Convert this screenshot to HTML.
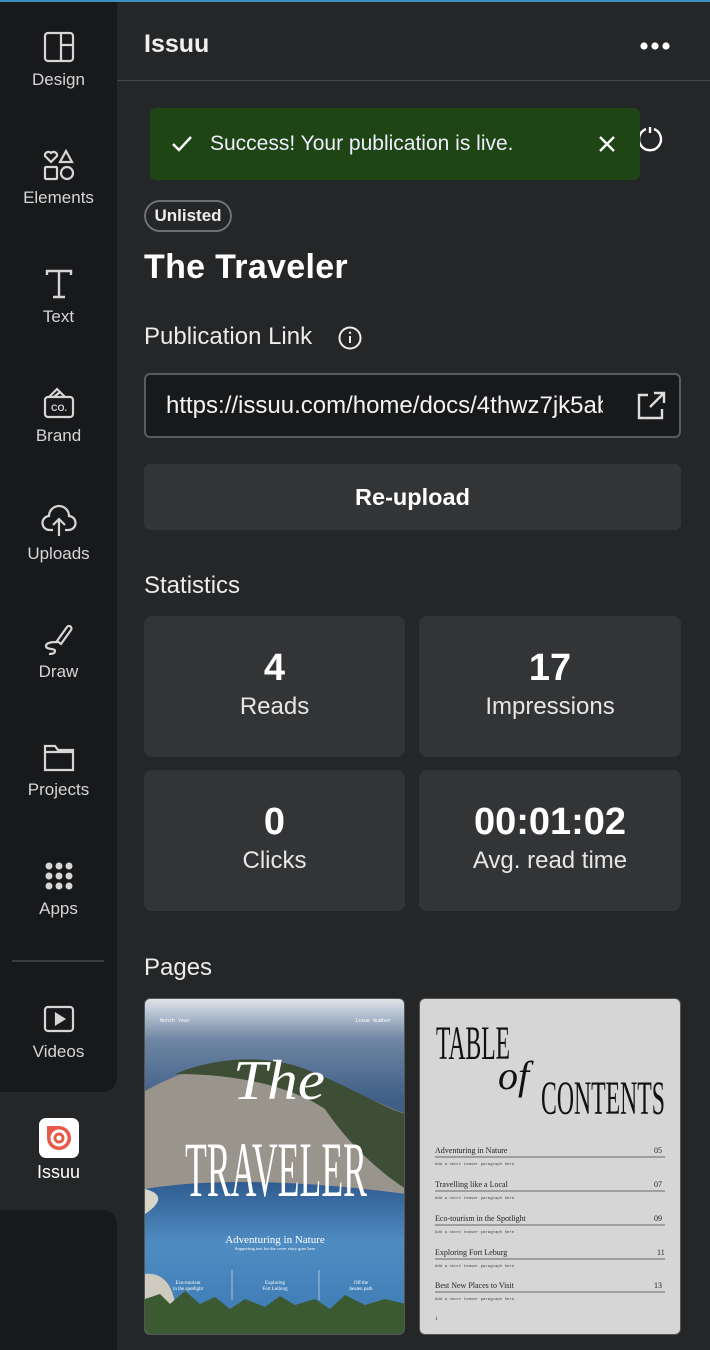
<!DOCTYPE html>
<html><head><meta charset="utf-8"><style>
*{margin:0;padding:0;box-sizing:border-box}
body{width:710px;height:1342px;background:#252627;font-family:"Liberation Sans",sans-serif;color:#fff;position:relative;overflow:hidden}
.sd1{position:absolute;left:0;top:0;width:117px;height:1092px;background:#18191b;border-bottom-right-radius:14px}
.sd2{position:absolute;left:0;top:1210px;width:117px;height:140px;background:#18191b;border-top-right-radius:14px}
.item{position:absolute;left:0;width:117px;text-align:center;font-size:17px;color:#d6d6d7}
.item svg{display:block;margin:0 auto}
.abs{position:absolute}
.h{font-size:24px;color:#ececec}
.card{position:absolute;background:#333436;border-radius:8px;text-align:center}
.card .n{font-size:38px;font-weight:bold;margin-top:32px;line-height:40px}
.card .l{font-size:24px;color:#e6e6e6;margin-top:5px}
</style></head><body>
<div class="sd1"></div><div class="sd2"></div>
<div style="position:absolute;left:0;top:0;width:710px;height:2px;background:#3a8fc0"></div>

<div class="item" style="top:30px"><svg width="34" height="34" viewBox="0 0 34 34" fill="none" stroke="#d6d6d7" stroke-width="2.2"><rect x="3" y="3" width="28" height="28" rx="3"/><path d="M19 3v28M19 15h12"/></svg><div style="margin-top:6px">Design</div></div>
<div class="item" style="top:148px"><svg width="34" height="34" viewBox="0 0 34 34" fill="none" stroke="#d6d6d7" stroke-width="2.2"><path d="M9 14L3 8a3.5 3.5 0 016-3 3.5 3.5 0 016 3z"/><path d="M24 3l6 11H18z"/><rect x="3" y="19" width="12" height="12" rx="1"/><circle cx="25" cy="25" r="6"/></svg><div style="margin-top:6px">Elements</div></div>
<div class="item" style="top:267px"><svg width="34" height="34" viewBox="0 0 34 34" fill="none" stroke="#d6d6d7" stroke-width="2.4"><path d="M5 8V4h24v4M17 4v26M11 30h12"/></svg><div style="margin-top:6px">Text</div></div>
<div class="item" style="top:386px"><svg width="34" height="34" viewBox="0 0 34 34" fill="none" stroke="#d6d6d7" stroke-width="2.2"><rect x="3" y="11" width="28" height="20" rx="3"/><path d="M7 11l8-8 4 4M12 11l6-5 5 5"/><text x="17" y="25" font-size="9" font-weight="bold" text-anchor="middle" fill="#d6d6d7" stroke="none" font-family="Liberation Sans">CO.</text></svg><div style="margin-top:6px">Brand</div></div>
<div class="item" style="top:504px"><svg width="36" height="34" viewBox="0 0 36 34" fill="none" stroke="#d6d6d7" stroke-width="2.2"><path d="M12 26H9a7 7 0 01-1-14 10 10 0 0120 0 7 7 0 01-1 14h-3"/><path d="M18 32V16M12 21l6-6 6 6"/></svg><div style="margin-top:6px">Uploads</div></div>
<div class="item" style="top:622px"><svg width="34" height="34" viewBox="0 0 34 34" fill="none" stroke="#d6d6d7" stroke-width="2.2"><path d="M15 19l10-14a2.5 2.5 0 014 3L19 22z"/><path d="M16 20c-4 0-12 0-12 4s9 2 9 5-4 3-6 3"/></svg><div style="margin-top:6px">Draw</div></div>
<div class="item" style="top:740px"><svg width="34" height="34" viewBox="0 0 34 34" fill="none" stroke="#d6d6d7" stroke-width="2.2"><path d="M3 6h10l3 4h15v20H3z M3 12h28"/></svg><div style="margin-top:6px">Projects</div></div>
<div class="item" style="top:859px"><svg width="34" height="34" viewBox="0 0 34 34" fill="#d6d6d7"><circle cx="7" cy="7" r="3.5"/><circle cx="17" cy="7" r="3.5"/><circle cx="27" cy="7" r="3.5"/><circle cx="7" cy="17" r="3.5"/><circle cx="17" cy="17" r="3.5"/><circle cx="27" cy="17" r="3.5"/><circle cx="7" cy="27" r="3.5"/><circle cx="17" cy="27" r="3.5"/><circle cx="27" cy="27" r="3.5"/></svg><div style="margin-top:6px">Apps</div></div>
<div style="position:absolute;left:12px;top:960px;width:92px;height:2px;background:#3a3b3d"></div>
<div class="item" style="top:1002px"><svg width="34" height="34" viewBox="0 0 34 34" fill="none" stroke="#d6d6d7" stroke-width="2.2"><rect x="3" y="5" width="28" height="24" rx="3"/><path d="M14 12v10l8-5z" fill="#d6d6d7"/></svg><div style="margin-top:6px">Videos</div></div>
<div class="item" style="top:1118px;color:#fff"><svg width="40" height="40" viewBox="0 0 40 40"><rect width="40" height="40" rx="7" fill="#fff"/><path d="M8 20A12 12 0 1 0 20 8H8z" fill="#e85a48"/><circle cx="20" cy="20" r="7" fill="none" stroke="#fff" stroke-width="3"/><circle cx="20" cy="20" r="2.6" fill="#fff"/></svg><div style="margin-top:4px;font-size:18px">Issuu</div></div>

<div class="abs" style="left:144px;top:30px;font-size:25px;font-weight:bold;color:#f0f0f0">Issuu</div>
<div class="abs" style="left:639px;top:38px"><svg width="32" height="10"><circle cx="5" cy="5" r="3.6" fill="#fff"/><circle cx="16" cy="5" r="3.6" fill="#fff"/><circle cx="27" cy="5" r="3.6" fill="#fff"/></svg></div>
<div class="abs" style="left:117px;top:80px;width:593px;height:1px;background:#46474a"></div>

<div class="abs" style="left:634px;top:124px"><svg width="32" height="32" viewBox="0 0 32 32" fill="none" stroke="#fff" stroke-width="2.4"><path d="M20 5a11 11 0 1 1-8 0"/><path d="M16 3v6" /></svg></div>
<div class="abs" style="left:150px;top:108px;width:490px;height:72px;background:#1e4513;border-radius:6px"></div>
<div class="abs" style="left:171px;top:134px"><svg width="22" height="20" viewBox="0 0 22 20" fill="none" stroke="#fff" stroke-width="2.4"><path d="M2 10l6 6L20 3"/></svg></div>
<div class="abs" style="left:210px;top:132px;font-size:21px;color:#eef">Success! Your publication is live.</div>
<div class="abs" style="left:598px;top:135px"><svg width="18" height="18" viewBox="0 0 18 18" stroke="#fff" stroke-width="2.4"><path d="M2 2l14 14M16 2L2 16"/></svg></div>

<div class="abs" style="left:144px;top:200px;width:88px;height:32px;border:2px solid #6e6f71;border-radius:16px;font-size:17px;text-align:center;line-height:28px;font-weight:bold;color:#eee">Unlisted</div>
<div class="abs" style="left:144px;top:248px;font-size:34px;font-weight:bold;letter-spacing:0.3px">The Traveler</div>
<div class="abs h" style="left:144px;top:323px">Publication Link</div>
<div class="abs" style="left:338px;top:326px"><svg width="24" height="24" viewBox="0 0 24 24" fill="none" stroke="#eee" stroke-width="2"><circle cx="12" cy="12" r="10.5"/><path d="M12 10v7"/><circle cx="12" cy="6.8" r="1.2" fill="#eee" stroke="none"/></svg></div>
<div class="abs" style="left:144px;top:373px;width:537px;height:65px;background:#18191b;border:2px solid #5a5b5d;border-radius:6px;overflow:hidden">
<div style="position:absolute;left:20px;top:17px;width:437px;overflow:hidden;white-space:nowrap;font-size:24px;color:#f4f4f4">https://issuu.com/home/docs/4thwz7jk5ab</div>
<svg style="position:absolute;left:488px;top:14px" width="34" height="34" viewBox="0 0 34 34" fill="none" stroke="#ddd" stroke-width="2.4"><path d="M14 6H5v23h23v-9"/><path d="M16 18L30 4M20 4h10v10"/></svg></div>
<div class="abs" style="left:144px;top:464px;width:537px;height:66px;background:#333436;border-radius:6px;text-align:center;line-height:66px;font-size:23.5px;font-weight:bold">Re-upload</div>
<div class="abs h" style="left:144px;top:572px">Statistics</div>
<div class="card" style="left:144px;top:616px;width:261px;height:141px"><div class="n">4</div><div class="l">Reads</div></div>
<div class="card" style="left:419px;top:616px;width:262px;height:141px"><div class="n">17</div><div class="l">Impressions</div></div>
<div class="card" style="left:144px;top:770px;width:261px;height:141px"><div class="n">0</div><div class="l">Clicks</div></div>
<div class="card" style="left:419px;top:770px;width:262px;height:141px"><div class="n">00:01:02</div><div class="l">Avg. read time</div></div>
<div class="abs h" style="left:144px;top:954px">Pages</div>

<div class="abs" style="left:144px;top:998px;width:261px;height:337px;border-radius:6px;overflow:hidden;border:1px solid #555">
<svg width="261" height="337" viewBox="0 0 261 337">
<defs><linearGradient id="sky" x1="0" y1="0" x2="0" y2="1"><stop offset="0" stop-color="#dfe4ea"/><stop offset=".12" stop-color="#6f86a4"/><stop offset=".3" stop-color="#3f5f86"/></linearGradient>
<linearGradient id="lag" x1="0" y1="0" x2="0" y2="1"><stop offset="0" stop-color="#2f5c90"/><stop offset=".4" stop-color="#4f8cc2"/><stop offset="1" stop-color="#3b78b0"/></linearGradient></defs>
<rect width="261" height="337" fill="url(#sky)"/>
<path d="M0 92 C30 75 70 60 110 62 C160 66 220 100 261 115 L261 200 L0 200Z" fill="#9a958c"/>
<path d="M30 75 C70 58 120 55 160 70 C200 85 240 110 261 115 L261 190 C230 170 200 140 180 110 C150 90 100 75 30 75Z" fill="#3e4d35"/>
<path d="M0 190 C60 180 150 180 261 195 L261 337 L0 337Z" fill="url(#lag)"/>
<path d="M0 190 C20 195 15 205 0 215Z" fill="#d9d4c8"/>
<path d="M0 275 C25 272 35 300 30 337 L0 337Z" fill="#cfcac0"/>
<path d="M0 337 L0 300 L15 295 L25 305 L40 292 L55 305 L70 298 L85 310 L100 300 L120 308 L135 297 L150 306 L170 300 L185 310 L200 296 L220 306 L240 300 L261 305 L261 337Z" fill="#3c5a32"/>
<text x="15" y="23" font-size="5" fill="#fff" font-family="Liberation Mono">Month Year</text>
<text x="210" y="23" font-size="5" fill="#fff" font-family="Liberation Mono">Issue Number</text>
<text x="88" y="100" font-size="56" fill="#fff" font-style="italic" font-family="Liberation Serif" textLength="92" lengthAdjust="spacingAndGlyphs">The</text>
<text x="40" y="197" font-size="78" fill="#fff" font-family="Liberation Serif" textLength="182" lengthAdjust="spacingAndGlyphs">TRAVELER</text>
<text x="130" y="244" font-size="11" fill="#fff" font-family="Liberation Serif" text-anchor="middle">Adventuring in Nature</text>
<text x="130" y="251" font-size="4.5" fill="#fff" font-family="Liberation Serif" text-anchor="middle">Supporting text for the cover story goes here</text>
<path d="M87 271v30M174 271v30" stroke="#ddd" stroke-width=".7"/>
<text x="43" y="285" font-size="5" fill="#fff" text-anchor="middle" font-family="Liberation Serif">Eco-tourism</text><text x="43" y="291" font-size="5" fill="#fff" text-anchor="middle" font-family="Liberation Serif">in the spotlight</text>
<text x="130" y="285" font-size="5" fill="#fff" text-anchor="middle" font-family="Liberation Serif">Exploring</text><text x="130" y="291" font-size="5" fill="#fff" text-anchor="middle" font-family="Liberation Serif">Fort Leiburg</text>
<text x="216" y="285" font-size="5" fill="#fff" text-anchor="middle" font-family="Liberation Serif">Off the</text><text x="216" y="291" font-size="5" fill="#fff" text-anchor="middle" font-family="Liberation Serif">beaten path</text>
</svg></div>

<div class="abs" style="left:419px;top:998px;width:262px;height:337px;border-radius:6px;overflow:hidden;background:#d6d6d6;border:1px solid #555">
<svg width="262" height="337" viewBox="0 0 262 337">
<text x="16" y="60" font-size="48" fill="#111" font-family="Liberation Serif" textLength="74" lengthAdjust="spacingAndGlyphs">TABLE</text>
<text x="78" y="90" font-size="40" fill="#111" font-style="italic" font-family="Liberation Serif">of</text>
<text x="121" y="115" font-size="48" fill="#111" font-family="Liberation Serif" textLength="124" lengthAdjust="spacingAndGlyphs">CONTENTS</text>
<g font-family="Liberation Serif" font-size="8" fill="#222">
<text x="15" y="154">Adventuring in Nature</text><text x="234" y="154">05</text>
<text x="15" y="188">Travelling like a Local</text><text x="234" y="188">07</text>
<text x="15" y="222">Eco-tourism in the Spotlight</text><text x="234" y="222">09</text>
<text x="15" y="256">Exploring Fort Leburg</text><text x="237" y="256">11</text>
<text x="15" y="289">Best New Places to Visit</text><text x="234" y="289">13</text>
<text x="15" y="321" font-size="5">1</text></g>
<g stroke="#666" stroke-width="1"><path d="M15 158h230M15 192h230M15 226h230M15 260h230M15 293h230"/></g>
<g font-family="Liberation Mono" font-size="4" fill="#444"><text x="15" y="166">Add a short teaser paragraph here</text><text x="15" y="200">Add a short teaser paragraph here</text><text x="15" y="234">Add a short teaser paragraph here</text><text x="15" y="268">Add a short teaser paragraph here</text><text x="15" y="301">Add a short teaser paragraph here</text></g>
</svg></div>
</body></html>
